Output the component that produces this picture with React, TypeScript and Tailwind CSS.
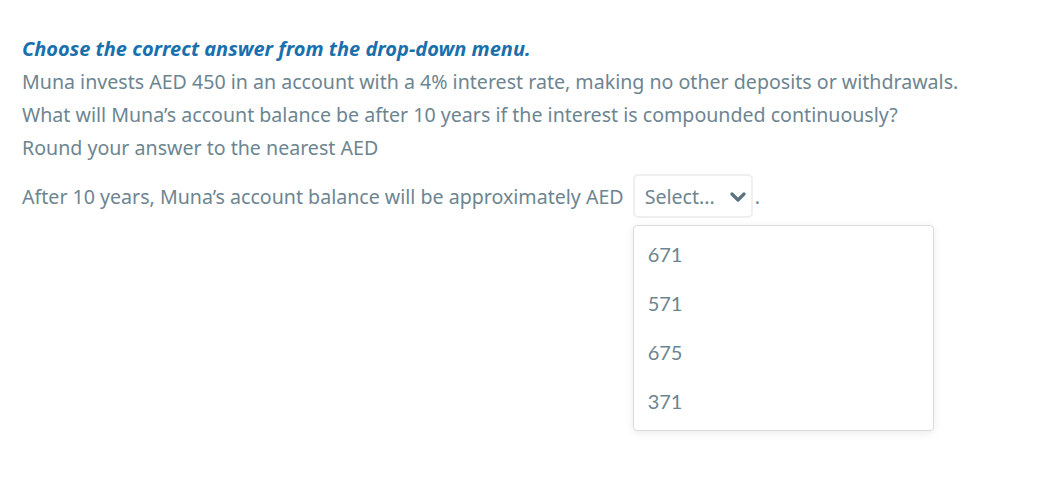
const options = ["671", "571", "675", "371"];

function Dropdown() {
  return (
    <div className="relative">
      <div className="flex h-[44px] w-[120px] items-center justify-between rounded-[5px] border-2 border-[#efefef] bg-white pl-[10px] pr-[5px]">
        <span>Select...</span>
        <svg width="16" height="12" viewBox="0 0 16 12" className="mt-[2px]">
          <polyline points="2,3 8,9 14,3" fill="none" stroke="#5b7381" strokeWidth="3.2" strokeLinecap="round" strokeLinejoin="round" />
        </svg>
      </div>
      <div className="absolute left-0 top-[51px] z-10 w-[301px] rounded-[4px] border border-[#dadada] bg-white py-[4px] shadow-[0_2px_8px_rgba(0,0,0,0.08)]">
        {options.map((o) => (
          <div key={o} className="flex h-[49px] items-center pl-[14px] text-[20px] text-[#6d8591]" style={{ fontFamily: "Lato, sans-serif" }}>
            {o}
          </div>
        ))}
      </div>
    </div>
  );
}

export default function App() {
  return (
    <div
      className="min-h-screen bg-white pl-[22px] pt-[32px] text-[19.6px] leading-[33px] text-[#6d8591]"
      style={{ fontFamily: '"Noto Sans", sans-serif' }}
    >
      <p className="font-bold italic text-[#1a70ad] text-[20px]">Choose the correct answer from the drop-down menu.</p>
      <p>Muna invests AED 450 in an account with a 4% interest rate, making no other deposits or withdrawals.</p>
      <p>What will Muna’s account balance be after 10 years if the interest is compounded continuously?</p>
      <p>Round your answer to the nearest AED</p>
      <div className="mt-[10px] flex items-center">
        <span className="mr-[9px]">After 10 years, Muna’s account balance will be approximately AED</span>
        <Dropdown />
        <span className="ml-[2px]">.</span>
      </div>
    </div>
  );
}
